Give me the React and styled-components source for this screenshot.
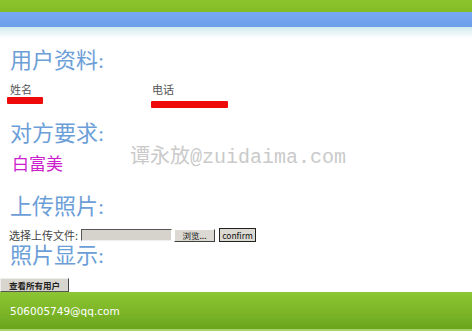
import styled, { createGlobalStyle } from 'styled-components';

const GlobalStyle = createGlobalStyle`
  html, body {
    margin: 0;
    padding: 0;
    background: #fff;
  }
  *, *::before, *::after {
    box-sizing: border-box;
  }
  body {
    font-family: "Liberation Serif", "Noto Sans CJK SC", serif;
  }
`;

const Page = styled.div`
  position: relative;
  width: 472px;
  height: 331px;
  overflow: hidden;
  display: flex;
  flex-direction: column;
`;

const TopBar = styled.div`
  height: 12px;
  flex-shrink: 0;
  background: linear-gradient(#8cc42c, #84bc26);
`;

const NavBar = styled.div`
  height: 15px;
  flex-shrink: 0;
  background: linear-gradient(#76aaf4, #6c9eea);
`;

const Shade = styled.div`
  height: 11px;
  flex-shrink: 0;
  background: linear-gradient(#cfeaee, #ffffff);
`;

const Heading = styled.h2`
  margin: ${p => p.$top}px 0 0 10px;
  height: 26px;
  line-height: 26px;
  font-size: 22px;
  font-weight: normal;
  color: #6c9ed8;
  font-family: "Liberation Serif", "Noto Sans CJK SC", serif;
`;

const InfoRow = styled.div`
  display: flex;
  margin-top: 8px;
  height: 26px;
`;

const Field = styled.div`
  width: ${p => p.$width}px;
  padding-left: ${p => p.$left}px;
  display: flex;
  flex-direction: column;
`;

const Label = styled.span`
  font-family: "Noto Sans CJK SC", sans-serif;
  font-size: 11px;
  line-height: 14px;
  color: #555;
  padding-left: ${p => p.$indent}px;
`;

const Redacted = styled.span`
  display: block;
  margin-top: ${p => p.$top}px;
  width: ${p => p.$width}px;
  height: 7px;
  border-radius: 1px;
  background: #ee0a0a;
`;

const Wish = styled.div`
  margin: 5px 0 0 12px;
  line-height: 22px;
  font-size: 17px;
  color: #cc1ecc;
  font-family: "Noto Sans CJK SC", sans-serif;
`;

const Watermark = styled.div`
  position: absolute;
  left: 130px;
  top: 147px;
  font-size: 20px;
  line-height: 22px;
  color: #cacaca;
  font-family: "Liberation Mono", "Noto Sans CJK SC", monospace;
  pointer-events: none;
`;

const UploadRow = styled.div`
  display: flex;
  align-items: center;
  margin: 8px 0 0 9px;
  height: 14px;
`;

const UploadLabel = styled.span`
  width: 72px;
  font-family: "Noto Sans CJK SC", sans-serif;
  font-size: 11px;
  color: #444;
  white-space: nowrap;
`;

const FileBox = styled.div`
  width: 91px;
  height: 12px;
  background: #d6d3cc;
  border-top: 1px solid #555;
  border-left: 1px solid #555;
  border-right: 1px solid #fff;
  border-bottom: 1px solid #eee;
`;

const WinButton = styled.button`
  width: ${p => p.$width}px;
  height: ${p => (p.$strong ? 14 : 13)}px;
  padding: 0;
  margin-left: ${p => p.$gap}px;
  font-family: "Noto Sans CJK SC", "DejaVu Sans", sans-serif;
  font-size: 8.5px;
  line-height: 1;
  color: #111;
  background: #dcd9d2;
  border: 1px solid;
  border-color: #fff #404040 #404040 #fff;
  outline: ${p => (p.$strong ? '1px solid #222' : 'none')};
  outline-offset: -1px;
  border-radius: 0;
`;

const ListButton = styled.button`
  margin-top: 9px;
  width: 69px;
  height: 14px;
  padding: 0;
  font-family: "Noto Sans CJK SC", sans-serif;
  font-size: 8.5px;
  font-weight: bold;
  color: #222;
  background: #d8d5cf;
  border: 1px solid;
  border-color: #eee #444 #555 #eee;
  border-radius: 0;
`;

const Footer = styled.footer`
  margin-top: auto;
  height: 39px;
  flex-shrink: 0;
  display: flex;
  align-items: center;
  padding-left: 10px;
  background: linear-gradient(#8cc634, #7ab426 60%, #6aa41c);
  border-bottom: 2px solid #a8d46a;
  color: #fff;
  font-family: "DejaVu Sans", Verdana, sans-serif;
  font-size: 10.5px;
`;

export default function App() {
  return (
    <>
      <GlobalStyle />
      <Page>
        <TopBar />
        <NavBar />
        <Shade />
        <Heading $top={10}>用户资料:</Heading>
        <InfoRow>
          <Field $width={151} $left={7}>
            <Label $indent={3}>姓名</Label>
            <Redacted $top={1} $width={36} />
          </Field>
          <Field $width={200} $left={0}>
            <Label $indent={1}>电话</Label>
            <Redacted $top={5} $width={77} />
          </Field>
        </InfoRow>
        <Heading $top={13}>对方要求:</Heading>
        <Wish>白富美</Wish>
        <Heading $top={20}>上传照片:</Heading>
        <UploadRow>
          <UploadLabel>选择上传文件:</UploadLabel>
          <FileBox />
          <WinButton $width={41} $gap={2}>浏览...</WinButton>
          <WinButton $width={37} $gap={4} $strong>confirm</WinButton>
        </UploadRow>
        <Heading $top={1}>照片显示:</Heading>
        <ListButton>查看所有用户</ListButton>
        <Footer>506005749@qq.com</Footer>
        <Watermark>谭永放@zuidaima.com</Watermark>
      </Page>
    </>
  );
}
